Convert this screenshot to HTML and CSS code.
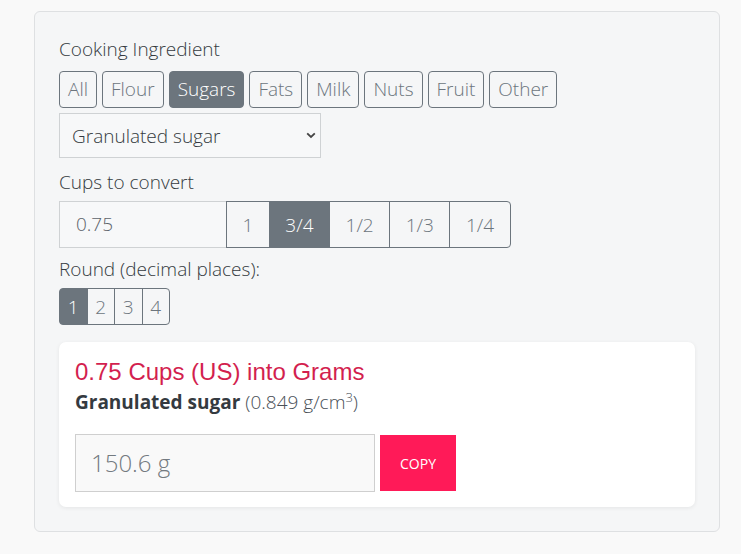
FILE: index.html
```html
<!DOCTYPE html>
<html lang="en">
<head>
<meta charset="utf-8">
<title>Cups to Grams</title>
<link rel="stylesheet" href="styles.css">
</head>
<body>
<div class="card">
  <div class="label">Cooking Ingredient</div>
  <div class="btn-row">
    <button class="btn">All</button>
    <button class="btn">Flour</button>
    <button class="btn active">Sugars</button>
    <button class="btn">Fats</button>
    <button class="btn">Milk</button>
    <button class="btn">Nuts</button>
    <button class="btn">Fruit</button>
    <button class="btn">Other</button>
  </div>
  <div class="select-wrap">
    <select class="select"><option>Granulated sugar</option></select>
    <svg class="chev" width="10" height="7" viewBox="0 0 10 7"><path d="M1.2 1.3 L5 5 L8.8 1.3" fill="none" stroke="#444" stroke-width="1.8"/></svg>
  </div>
  <div class="label second">Cups to convert</div>
  <div class="input-group">
    <div class="cups-input">0.75</div>
    <button class="gbtn">1</button>
    <button class="gbtn active">3/4</button>
    <button class="gbtn">1/2</button>
    <button class="gbtn">1/3</button>
    <button class="gbtn last">1/4</button>
  </div>
  <div class="label third">Round (decimal places):</div>
  <div class="round-group">
    <button class="rbtn active first">1</button>
    <button class="rbtn">2</button>
    <button class="rbtn">3</button>
    <button class="rbtn last">4</button>
  </div>
  <div class="result">
    <div class="result-title">0.75 Cups (US) into Grams</div>
    <div class="result-sub"><strong>Granulated sugar</strong> <span class="density">(0.849 g/cm<sup>3</sup>)</span></div>
    <div class="output-row">
      <div class="output">150.6 g</div>
      <button class="copy">COPY</button>
    </div>
  </div>
</div>
</body>
</html>
```
FILE: styles.css
```css
* { box-sizing: border-box; }
html, body { margin: 0; }
body {
  background: #f9f9f9;
  padding: 11px 0 0 34px;
  font-family: "Open Sans", "Liberation Sans", sans-serif;
  color: #343a40;
}
.card {
  width: 686px;
  height: 521px;
  background: #f5f6f7;
  border: 1px solid #dee0e2;
  border-radius: 6px;
  padding: 24px;
}
.label {
  font-size: 19px;
  font-weight: 300;
  line-height: 27px;
  color: #343a40;
  margin-bottom: 8px;
}
.label.second { margin-top: 11px; margin-bottom: 5px; }
.label.third { margin-top: 8px; margin-bottom: 5px; }
.btn-row { display: flex; gap: 5px; }
.btn {
  font-family: "Open Sans", sans-serif;
  font-weight: 300;
  font-size: 19px;
  line-height: 27px;
  padding: 4px 8px;
  border: 1px solid #6c757d;
  border-radius: 4px;
  background: transparent;
  color: #6c757d;
  margin: 0;
}
.btn.active, .gbtn.active, .rbtn.active {
  background: #6c757d;
  color: #fff;
}
.select-wrap {
  position: relative;
  width: 262px;
  margin-top: 5px;
}
.select {
  display: block;
  width: 262px;
  height: 45px;
  appearance: none;
  -webkit-appearance: none;
  background: #f7f8f9;
  border: 1px solid #cfd2d4;
  border-radius: 0;
  padding: 0 12px;
  font-family: "Open Sans", sans-serif;
  font-weight: 300;
  font-size: 19px;
  color: #343a40;
}
.chev { position: absolute; right: 5px; top: 19px; }
.input-group { display: flex; height: 47px; }
.cups-input {
  width: 168px;
  border: 1px solid #cfd2d4;
  background: #f7f8f9;
  padding: 0 16px;
  font-weight: 300;
  font-size: 19px;
  line-height: 45px;
  color: #5c636a;
}
.gbtn {
  font-family: "Open Sans", sans-serif;
  font-weight: 300;
  font-size: 19px;
  border: 1px solid #6c757d;
  background: transparent;
  color: #6c757d;
  margin: 0 0 0 -1px;
  padding: 0 15.5px;
  border-radius: 0;
}
.gbtn.last { border-radius: 0 4px 4px 0; }
.round-group { display: flex; height: 37px; }
.rbtn {
  font-family: "Open Sans", sans-serif;
  font-weight: 300;
  font-size: 19px;
  width: 28.5px;
  padding: 0;
  border: 1px solid #6c757d;
  background: transparent;
  color: #6c757d;
  margin: 0 0 0 -1px;
  border-radius: 0;
}
.rbtn.first { margin-left: 0; border-radius: 4px 0 0 4px; }
.rbtn.last { border-radius: 0 4px 4px 0; }
.result {
  margin-top: 17px;
  background: #fff;
  border-radius: 7px;
  box-shadow: 0 1px 4px rgba(0,0,0,0.07);
  padding: 15px 16px 15px 16px;
  height: 165px;
}
.result-title {
  font-family: "Liberation Sans", Arial, sans-serif;
  font-size: 24px;
  line-height: 30px;
  color: #d31f4f;
}
.result-sub {
  margin-top: 1px;
  font-size: 19px;
  line-height: 28px;
  color: #343a40;
}
.result-sub strong { font-weight: 700; }
.density {
  font-weight: 300;
  color: #495057;
}
.density sup { font-size: 13px; line-height: 0; }
.output-row { display: flex; gap: 5px; margin-top: 18px; align-items: flex-start; }
.output {
  width: 300px;
  height: 58px;
  background: #f9f9f9;
  border: 1px solid #cfcfcf;
  padding: 0 15px;
  font-weight: 300;
  font-size: 24px;
  line-height: 56px;
  color: #737a80;
}
.copy {
  margin-top: 1px;
  width: 76px;
  height: 56px;
  border: none;
  background: #ff1a58;
  color: #fff;
  font-family: "Open Sans", sans-serif;
  font-size: 14px;
  padding: 0;
}
```
